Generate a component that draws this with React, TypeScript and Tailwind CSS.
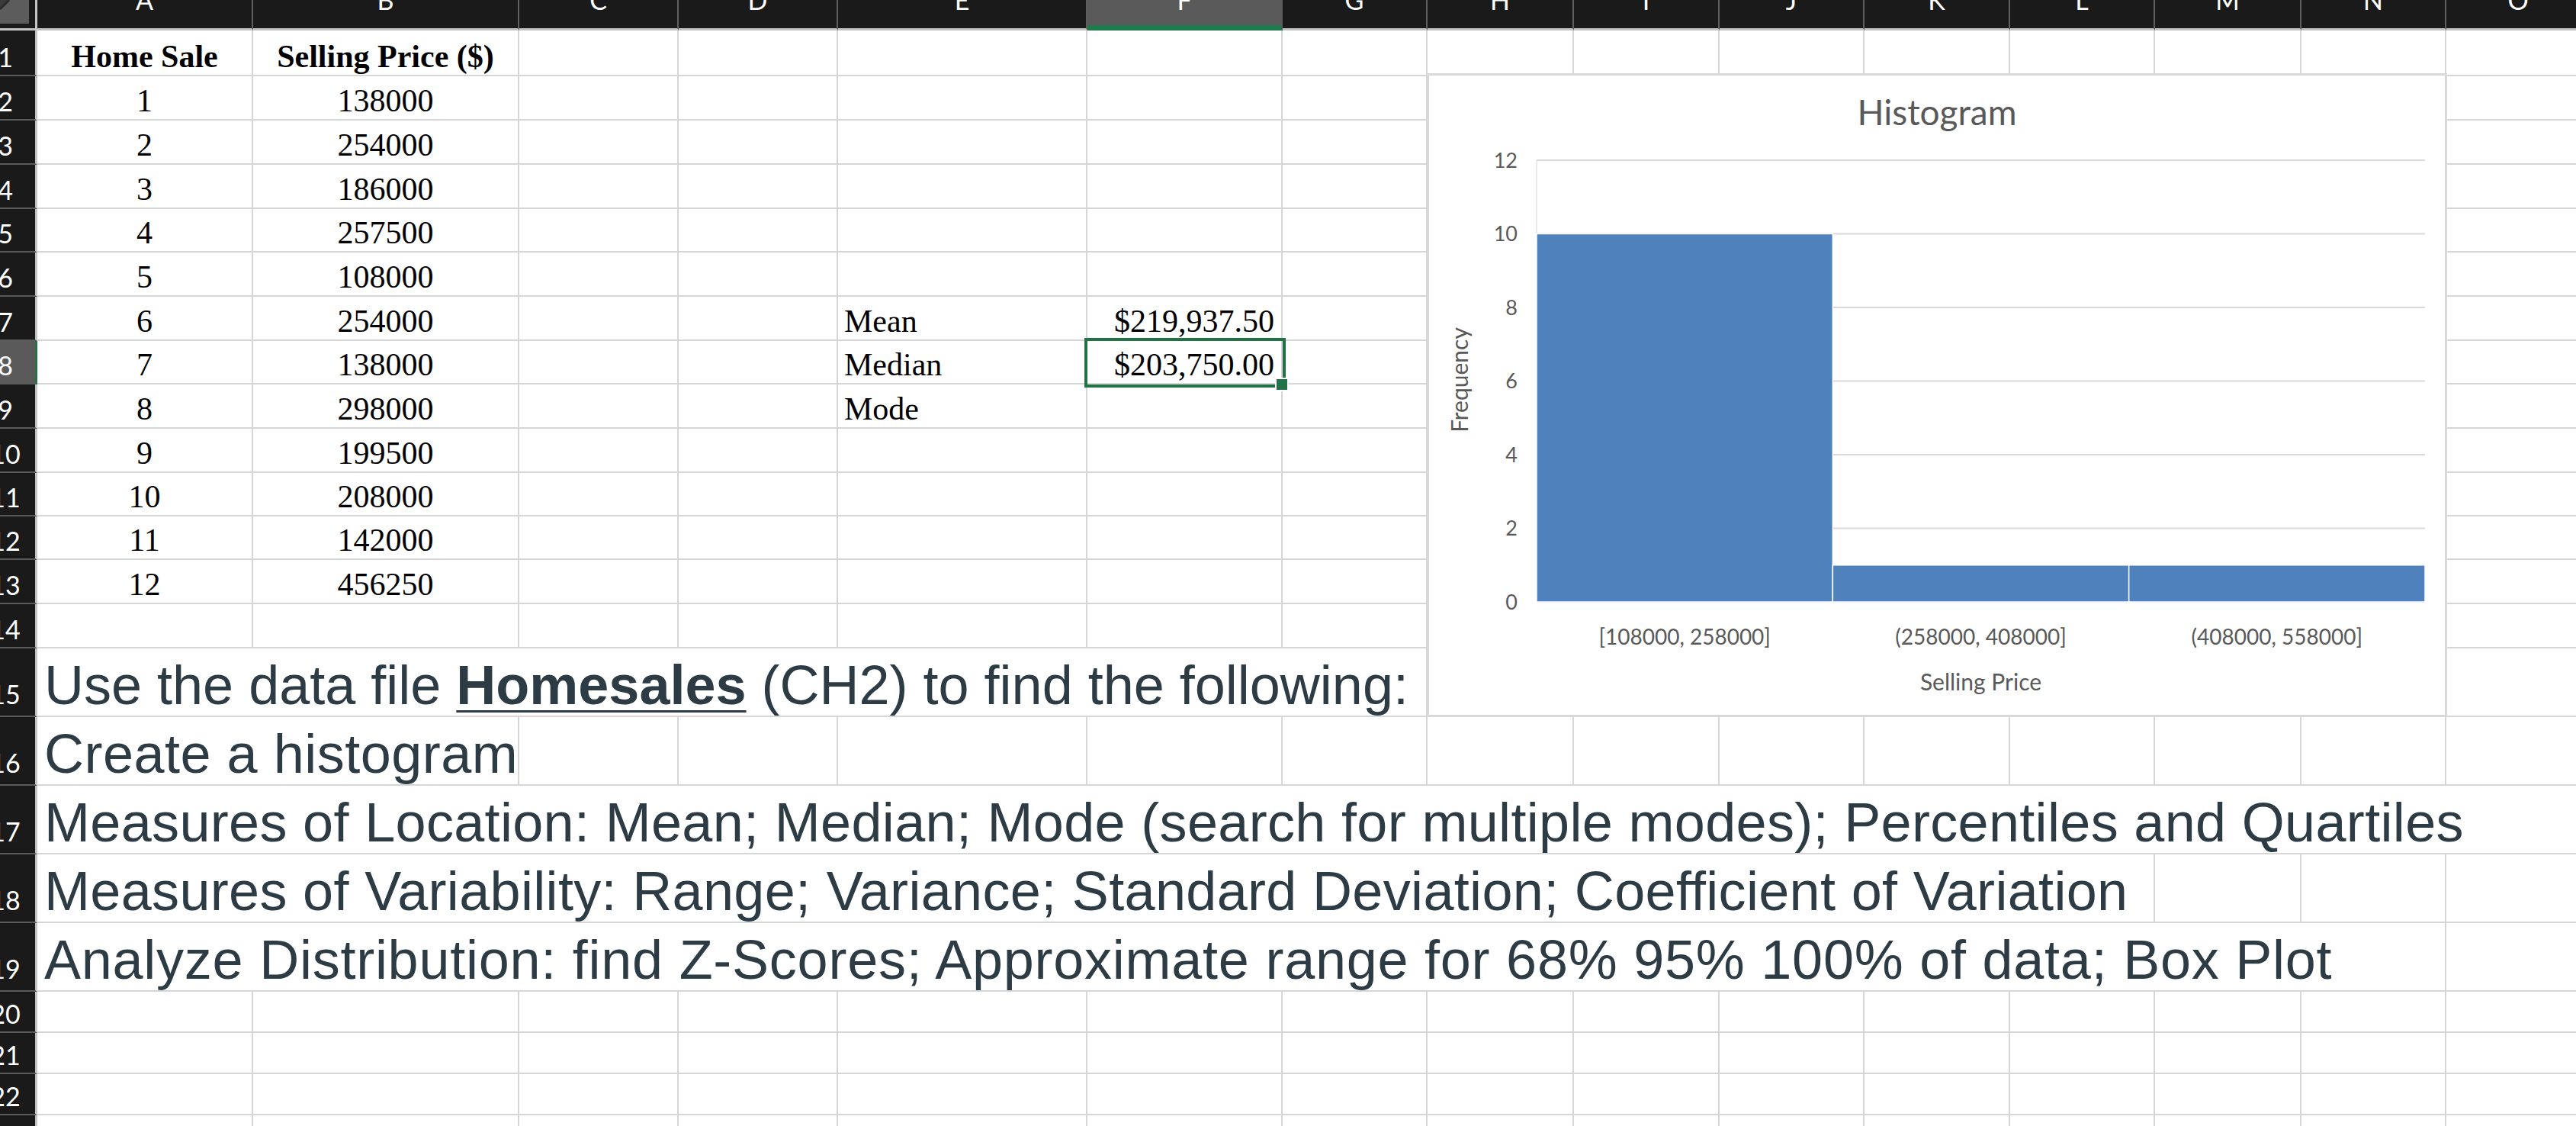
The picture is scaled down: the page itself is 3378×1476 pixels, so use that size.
import React from "react";

type Align = "left" | "center" | "right";
type Spec = { t: string; a: Align; b?: boolean };

const COLS: { l: string; w: string }[] = [
  { l: "A", w: "w-[283px]" },
  { l: "B", w: "w-[349px]" },
  { l: "C", w: "w-[209px]" },
  { l: "D", w: "w-[209px]" },
  { l: "E", w: "w-[327px]" },
  { l: "F", w: "w-[256px]" },
  { l: "G", w: "w-[190px]" },
  { l: "H", w: "w-[192px]" },
  { l: "I", w: "w-[191px]" },
  { l: "J", w: "w-[190px]" },
  { l: "K", w: "w-[191px]" },
  { l: "L", w: "w-[190px]" },
  { l: "M", w: "w-[192px]" },
  { l: "N", w: "w-[190px]" },
  { l: "O", w: "w-[190px]" },
];

const serif = "font-['Liberation_Serif','Times_New_Roman',serif] text-[42px] leading-none text-black whitespace-nowrap";
const sans = "font-['Liberation_Sans',Arial,sans-serif] text-[72px] leading-none text-[#2d3b45] whitespace-nowrap";
const head = "font-['Lato','Open_Sans',sans-serif] text-[34px] leading-none text-white";

const prices = ["138000", "254000", "186000", "257500", "108000", "254000", "138000", "298000", "199500", "208000", "142000", "456250"];

const topRows: { n: number; h: string }[] = [
  { n: 1, h: "h-[60px]" },
  { n: 2, h: "h-[58px]" },
  { n: 3, h: "h-[58px]" },
  { n: 4, h: "h-[58px]" },
  { n: 5, h: "h-[57px]" },
  { n: 6, h: "h-[58px]" },
  { n: 7, h: "h-[58px]" },
  { n: 8, h: "h-[57px]" },
  { n: 9, h: "h-[58px]" },
  { n: 10, h: "h-[58px]" },
  { n: 11, h: "h-[57px]" },
  { n: 12, h: "h-[57px]" },
  { n: 13, h: "h-[58px]" },
  { n: 14, h: "h-[58px]" },
];

function cellsFor(n: number): Record<number, Spec> {
  const c: Record<number, Spec> = {};
  if (n === 1) {
    c[0] = { t: "Home Sale", a: "center", b: true };
    c[1] = { t: "Selling Price ($)", a: "center", b: true };
  } else if (n >= 2 && n <= 13) {
    c[0] = { t: String(n - 1), a: "center" };
    c[1] = { t: prices[n - 2], a: "center" };
  }
  if (n === 7) {
    c[4] = { t: "Mean", a: "left" };
    c[5] = { t: "$219,937.50", a: "right" };
  }
  if (n === 8) {
    c[4] = { t: "Median", a: "left" };
    c[5] = { t: "$203,750.00", a: "right" };
  }
  if (n === 9) {
    c[4] = { t: "Mode", a: "left" };
  }
  return c;
}

function RowHead({ n, tall, active }: { n: number; tall?: boolean; active?: boolean }) {
  return (
    <div
      className={`w-[49px] shrink-0 flex items-end overflow-hidden border-r-[3px] border-b-2 border-b-[#5a5a5a] ${
        active ? "bg-[#5a5a5a] border-r-[#217346]" : "bg-[#1a1a1a] border-r-[#c4c4c4]"
      } ${tall ? "pb-[11px]" : "pb-[6px]"}`}
    >
      <span className={`ml-[-33px] w-[80px] shrink-0 text-center ${head}`}>{n}</span>
    </div>
  );
}

function alignCls(a: Align) {
  if (a === "center") return "justify-center";
  if (a === "right") return "justify-end pr-[9px]";
  return "justify-start pl-[8px]";
}

function HeaderRow() {
  return (
    <div className="flex h-[40px]">
      <div className="relative w-[49px] shrink-0 bg-[#1a1a1a] border-r-[3px] border-b-[3px] border-[#c4c4c4]">
        <div className="absolute left-0 top-0 w-[38px] h-[31px] bg-[#5c5c5c]">
          <svg width="38" height="31" viewBox="0 0 38 31" className="absolute left-0 top-0">
            <polygon points="0,0 12,0 0,12" fill="#3a3a3a" />
            <line x1="0" y1="12" x2="12" y2="0" stroke="#2a2a2a" strokeWidth="3" />
          </svg>
        </div>
      </div>
      {COLS.map((c) => {
        const active = c.l === "F";
        return (
          <div
            key={c.l}
            className={`${c.w} shrink-0 flex justify-center overflow-hidden border-r-2 ${
              active
                ? "bg-[#5a5a5a] border-b-[7px] border-b-[#1f7a4d] border-r-[#5a5a5a]"
                : "bg-[#1a1a1a] border-b-[3px] border-b-[#c4c4c4] border-r-[#5e5e5e]"
            }`}
          >
            <span className={`mt-[-17px] ${head}`}>{c.l}</span>
          </div>
        );
      })}
    </div>
  );
}

function DataRow({ n, h }: { n: number; h: string }) {
  const cells = cellsFor(n);
  return (
    <div className={`flex ${h}`}>
      <RowHead n={n} active={n === 8} />
      {COLS.map((c, i) => {
        const s = cells[i];
        const selected = n === 8 && i === 5;
        return (
          <div
            key={c.l}
            className={`${selected ? "relative" : ""} ${c.w} shrink-0 flex items-end pb-[3px] border-r-2 border-b-2 border-[#d6d6d6] bg-white ${
              s ? alignCls(s.a) : ""
            }`}
          >
            {s && <span className={`${serif} ${s.b ? "font-bold" : ""}`}>{s.t}</span>}
            {selected && (
              <>
                <div className="absolute z-10 left-[-4px] top-[-4px] w-[264px] h-[65px] border-[4px] border-[#217346]" />
                <div className="absolute z-20 left-[246px] top-[48px] w-[18px] h-[18px] bg-[#217346] border-2 border-white" />
              </>
            )}
          </div>
        );
      })}
    </div>
  );
}

function TextRow({
  n,
  span,
  spanW,
  track,
  children,
}: {
  n: number;
  span: number;
  spanW: string;
  track: string;
  children: React.ReactNode;
}) {
  return (
    <div className="flex h-[90px]">
      <RowHead n={n} tall />
      <div className={`${spanW} shrink-0 flex items-end pb-[4px] pl-[9px] border-r-2 border-b-2 border-[#d6d6d6] bg-white`}>
        <span className={`${sans} ${track}`}>{children}</span>
      </div>
      {COLS.slice(span).map((c) => (
        <div key={c.l} className={`${c.w} shrink-0 border-r-2 border-b-2 border-[#d6d6d6] bg-white`} />
      ))}
    </div>
  );
}

function EmptyRow({ n }: { n: number }) {
  return (
    <div className="flex h-[54px]">
      <RowHead n={n} />
      {COLS.map((c) => (
        <div key={c.l} className={`${c.w} shrink-0 border-r-2 border-b-2 border-[#d6d6d6] bg-white`} />
      ))}
    </div>
  );
}

function Chart() {
  const x0 = 144;
  const pw = 1165;
  const bw = pw / 3;
  const y0 = 693;
  const unit = 48.25;
  const ticks = [0, 2, 4, 6, 8, 10, 12];
  const bars = [10, 1, 1];
  const labels = ["[108000, 258000]", "(258000, 408000]", "(408000, 558000]"];
  const font = "Lato, 'Open Sans', sans-serif";
  return (
    <div className="absolute z-30 left-[1871px] top-[96px] w-[1338px] h-[844px] bg-white border-[3px] border-[#d9d9d9]">
      <svg className="absolute left-[-3px] top-[-3px]" width="1338" height="844" viewBox="0 0 1338 844">
        <text x="669" y="68" textAnchor="middle" fontFamily={font} fontSize="46" fill="#595959">
          Histogram
        </text>
        {ticks.map((t) => (
          <line key={t} x1={x0} x2={x0 + pw} y1={y0 - t * unit} y2={y0 - t * unit} stroke="#d9d9d9" strokeWidth="2" />
        ))}
        <line x1={x0} x2={x0} y1={y0 - 12 * unit} y2={y0} stroke="#e3e3e3" strokeWidth="1.5" />
        {bars.map((b, i) => (
          <rect
            key={i}
            x={x0 + i * bw}
            y={y0 - b * unit}
            width={bw}
            height={b * unit}
            fill="#4f81bd"
            stroke="#ffffff"
            strokeWidth="1.5"
          />
        ))}
        {ticks.map((t) => (
          <text
            key={t}
            x="119"
            y={y0 - t * unit + 9.5}
            textAnchor="end"
            fontFamily={font}
            fontSize="27"
            fill="#595959"
          >
            {t}
          </text>
        ))}
        {labels.map((l, i) => (
          <text
            key={l}
            x={x0 + bw * i + bw / 2}
            y="749"
            textAnchor="middle"
            fontFamily={font}
            fontSize="28"
            fill="#595959"
          >
            {l}
          </text>
        ))}
        <text x={x0 + pw / 2} y="809" textAnchor="middle" fontFamily={font} fontSize="30" fill="#595959">
          Selling Price
        </text>
        <text
          x="0"
          y="0"
          transform="translate(54 402) rotate(-90)"
          textAnchor="middle"
          fontFamily={font}
          fontSize="30"
          fill="#595959"
        >
          Frequency
        </text>
      </svg>
    </div>
  );
}

export default function App() {
  return (
    <div className="relative w-[3378px] h-[1476px] overflow-hidden bg-white">
      <HeaderRow />
      {topRows.map((r) => (
        <DataRow key={r.n} n={r.n} h={r.h} />
      ))}
      <TextRow n={15} span={7} spanW="w-[1823px]" track="tracking-[0px]">
        Use the data file{" "}
        <span className="font-bold underline decoration-[3px] underline-offset-[8px]">Homesales</span> (CH2) to find
        the following:
      </TextRow>
      <TextRow n={16} span={2} spanW="w-[632px]" track="tracking-[0.5px]">
        Create a histogram
      </TextRow>
      <TextRow n={17} span={15} spanW="w-[3349px]" track="tracking-[0.33px]">
        Measures of Location: Mean; Median; Mode (search for multiple modes); Percentiles and Quartiles
      </TextRow>
      <TextRow n={18} span={12} spanW="w-[2777px]" track="tracking-[0.33px]">
        Measures of Variability: Range; Variance; Standard Deviation; Coefficient of Variation
      </TextRow>
      <TextRow n={19} span={14} spanW="w-[3159px]" track="tracking-[0.75px]">
        Analyze Distribution: find Z-Scores; Approximate range for 68% 95% 100% of data; Box Plot
      </TextRow>
      <EmptyRow n={20} />
      <EmptyRow n={21} />
      <EmptyRow n={22} />
      <EmptyRow n={23} />
      <Chart />
    </div>
  );
}
